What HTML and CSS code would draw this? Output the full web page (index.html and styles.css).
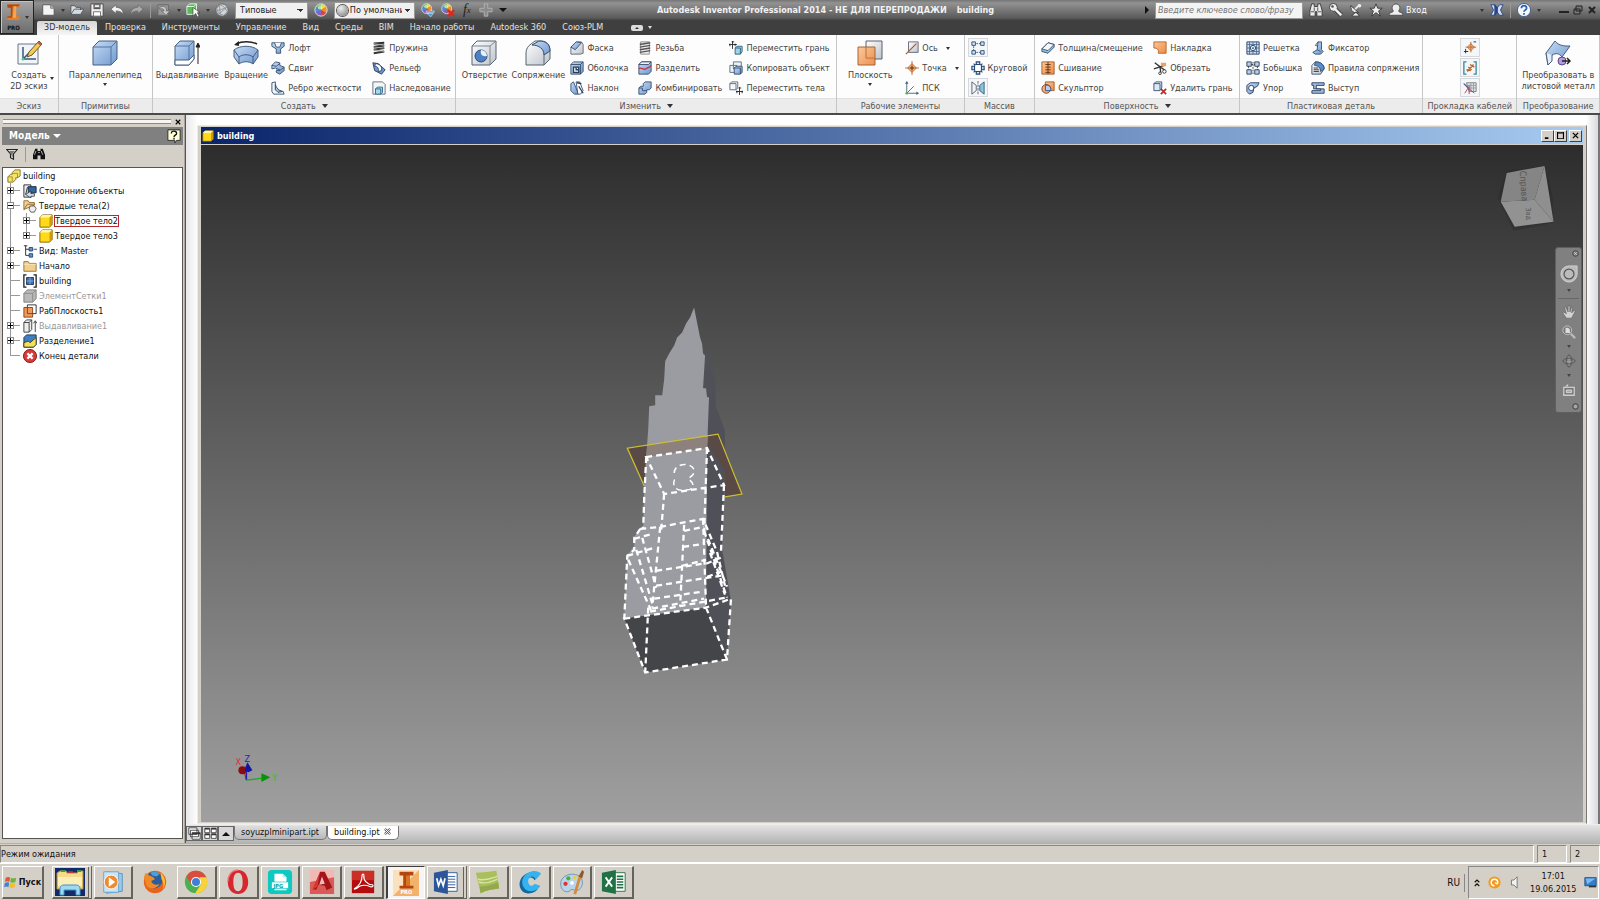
FILE: index.html
```html
<!DOCTYPE html>
<html lang="ru">
<head>
<meta charset="utf-8">
<title>Autodesk Inventor Professional 2014</title>
<link rel="stylesheet" href="styles.css">
</head>
<body>
<svg class="defs" aria-hidden="true">
<defs>
<linearGradient id="gb" x1="0" y1="0" x2="1" y2="1"><stop offset="0" stop-color="#c6dcf5"/><stop offset="1" stop-color="#6f98d0"/></linearGradient>
<linearGradient id="gw" x1="0" y1="0" x2="1" y2="1"><stop offset="0" stop-color="#fff"/><stop offset="1" stop-color="#bcc3cc"/></linearGradient>
<linearGradient id="go" x1="0" y1="0" x2="1" y2="1"><stop offset="0" stop-color="#fbc695"/><stop offset="1" stop-color="#ee8b45"/></linearGradient>
</defs>
<symbol id="new" viewBox="0 0 16 16"><path d="M2 2h9l4 4v8H2z" fill="#f4f4f4" stroke="#555"/><path d="M11 2v4h4" fill="#bbb" stroke="#777"/></symbol>
<symbol id="open" viewBox="0 0 16 16"><path d="M1 13V3h4l2 2h5v3M1 13l4-6h11l-4 6z" fill="#d5dbe2" stroke="#4e5358"/></symbol>
<symbol id="save" viewBox="0 0 16 16"><path d="M1 1h14v14H1z" fill="#eee" stroke="#444"/><path d="M4 1h8v6H4z" fill="#555"/><path d="M5 2h6v3H5zM4 10h8v5H4z" fill="#fff" stroke="#666"/></symbol>
<symbol id="undo" viewBox="0 0 16 16"><path d="M1 7l6-5v3c5 0 8 3 8 8-2-3-4-4-8-4v3z" fill="#f2f2f2" stroke="#555" stroke-width=".7"/></symbol>
<symbol id="redo" viewBox="0 0 16 16"><path d="M15 7L9 2v3c-5 0-8 3-8 8 2-3 4-4 8-4v3z" fill="#aaa" stroke="#666" stroke-width=".7"/></symbol>
<symbol id="upd" viewBox="0 0 16 16"><path d="M1 2h12v12H1z" fill="#999" stroke="#666"/><path d="M3 5c5-3 8 0 8 4h4l-5 5-5-5h3c0-2-2-3-5-2z" fill="#c4c4c4" stroke="#6a6a6a"/></symbol>
<symbol id="selg" viewBox="0 0 16 16"><path d="M1 4l3-3h8v9l-3 3H1z" fill="#5bb85b" stroke="#e8ffe8"/><path d="M1 4h8v9M9 4l3-3" fill="none" stroke="#e8ffe8"/><path d="M8 5v10l3-3 2 4 2-1-2-4h3z" fill="#fff" stroke="#333" stroke-width=".7"/></symbol>
<symbol id="ball" viewBox="0 0 16 16"><circle cx="8" cy="8" r="7" fill="#d3d6d9" stroke="#666"/><path d="M2 6l4-4 5 3 3 5-4 4-6-2zM5 2l1 11M2 9l12-4M4 13l9-8" stroke="#8b9198" fill="none"/></symbol>
<symbol id="wheel" viewBox="0 0 16 16"><path d="M8 8L8 1A7 7 0 0 1 14 4.500z" fill="#f6d83a"/><path d="M8 8L14 4.500A7 7 0 0 1 14 11.500z" fill="#f08b32"/><path d="M8 8L14 11.500A7 7 0 0 1 8 15z" fill="#d9443e"/><path d="M8 8L8 15A7 7 0 0 1 2 11.500z" fill="#8c5fc0"/><path d="M8 8L2 11.500A7 7 0 0 1 2 4.500z" fill="#4a8be0"/><path d="M8 8L2 4.500A7 7 0 0 1 8 1z" fill="#63bf55"/><circle cx="8" cy="8" r="7" fill="none" stroke="#e8e8e8"/><circle cx="7" cy="5" r="2.500" fill="#fff" opacity=".5"/></symbol>
<symbol id="wheeld" viewBox="0 0 16 16"><use href="#wheel" width="13" height="13"/><path d="M6 9h9v2H6zM7 12h7l-3 4z" fill="#4b9ae0" stroke="#fff" stroke-width=".5"/></symbol>
<symbol id="wheelx" viewBox="0 0 16 16"><use href="#wheel" width="13" height="13"/><path d="M8 8l7 7M15 8l-7 7" stroke="#d42a22" stroke-width="2.500"/></symbol>
<symbol id="plus" viewBox="0 0 16 16"><path d="M6 1h4v5h5v4h-5v5H6v-5H1V6h5z" fill="#8b8b8b" stroke="#b5b5b5"/></symbol>
<symbol id="bino" viewBox="0 0 16 16"><path d="M3 1h3v3h4V1h3l2 8v6H9v-5H7v5H1V9z" fill="#e9e9e9" stroke="#333"/><path d="M2 10h4M10 10h4M6 5v4M10 5v4" stroke="#444"/></symbol>
<symbol id="binob" viewBox="0 0 16 16"><path d="M3 1h3v3h4V1h3l3 8v6h-6v-5H6v5H0V9z" fill="#111"/><path d="M2 9l2-5M11 4l2 5M7 6h2" stroke="#ddd"/></symbol>
<symbol id="key" viewBox="0 0 16 16"><path d="M7 7l7 7" stroke="#333" stroke-width="5"/><circle cx="5" cy="5" r="4.500" fill="#eee" stroke="#333"/><path d="M7 7l7 7" stroke="#eee" stroke-width="3"/><circle cx="4" cy="4" r="1.500" fill="#555"/></symbol>
<symbol id="dish" viewBox="0 0 16 16"><path d="M2 3c0 7 4 9 9 8zM3 15h9l-4-5z" fill="#eee" stroke="#333"/><path d="M7 7l5-5" stroke="#eee" stroke-width="2"/><circle cx="12" cy="3" r="2" fill="#eee"/></symbol>
<symbol id="star" viewBox="0 0 16 16"><path d="M8 1l2 5h5l-4 3 2 6-5-4-5 4 2-6-4-3h5z" fill="#eee" stroke="#333"/></symbol>
<symbol id="user" viewBox="0 0 16 16"><path d="M5 9C2 6 4 1 8 1s6 5 3 8c0 2 5 1 5 5H0c0-4 5-3 5-5z" fill="#eee" stroke="#444"/></symbol>
<symbol id="exch" viewBox="0 0 16 16"><path d="M1 2h4l3 4 3-4h4l-3 6 3 6h-4l-3-4-3 4H1l3-6z" fill="#d3ddf0" stroke="#27458a"/><path d="M5 2l3 4v4l-3 4" stroke="#27458a" stroke-width="2" fill="#27458a"/></symbol>
<symbol id="help" viewBox="0 0 16 16"><circle cx="8" cy="8" r="7.500" fill="#f4f7fb" stroke="#3c5a8a"/><path d="M5 6c0-4 6-4 6 0 0 2-3 2-3 4M8 11.500v2" stroke="#2b62b5" stroke-width="2" fill="none"/></symbol>
<symbol id="inv" viewBox="0 0 32 32"><path d="M4 1h24l-1 6h-6v16h6l1 7H4l1-7h6V7H5z" fill="#e07f2c"/><path d="M4 1h24l-2 3H14v22H4l1-3h6V7H5z" fill="#b4470f"/><path d="M17 4h4v22h-7z" fill="#f4a552"/></symbol>

<symbol id="sketch" viewBox="0 0 26 26"><path d="M2 4h20v20H2z" fill="#f2f5f8" stroke="#6b7785"/><path d="M7 7v12h13M7 19l8-8" fill="none" stroke="#33597f" stroke-width="1.500"/><circle cx="7" cy="19" r="1.500" fill="#4c9"/><path d="M11 17l2-5L23 1l3 3-10 11z" fill="#f4cb54" stroke="#6c5526"/><path d="M22 2l3 3" stroke="#b55" stroke-width="2"/></symbol>
<symbol id="box" viewBox="0 0 26 26"><path d="M1 7l6-6h18v18l-6 6H1z" fill="url(#gb)" stroke="#465e80"/><path d="M1 7h18v18M19 7l6-6" fill="none" stroke="#5473a0"/></symbol>
<symbol id="extr" viewBox="0 0 26 26"><path d="M1 6l5-5h14v18l-5 6H1z" fill="url(#gb)" stroke="#465e80"/><path d="M1 6h14v19M15 6l5-5" fill="none" stroke="#5473a0"/><path d="M1 20h14l5-5v4l-5 6H1z" fill="#fff" stroke="#465e80"/><path d="M24 24V4M22 7l2-4 2 4z" stroke="#222" fill="#222"/></symbol>
<symbol id="rev" viewBox="0 0 26 26"><path d="M1 10c6-5 18-5 24 0v7l-5 7c-4-3-10-3-14 0l-5-7z" fill="url(#gb)" stroke="#465e80"/><path d="M1 10l5 7c4-3 10-3 14 0l5-7M6 17v7M20 17v7" fill="none" stroke="#465e80"/><path d="M24 4C18 1 9 1 3 4" fill="none" stroke="#222" stroke-width="1.500"/><path d="M1 5l5-4v5z" fill="#222"/></symbol>
<symbol id="loft" viewBox="0 0 16 16"><path d="M1 2h14v4l-4 3v5H6V9L1 6z" fill="url(#gb)" stroke="#344d6c"/><path d="M4 2l2 5h4l2-5" fill="#f5f8fb" stroke="#344d6c"/></symbol>
<symbol id="sweep" viewBox="0 0 16 16"><path d="M1 5l4-4 5 1v3l5 2v4l-5 4-4-2v-2l4-1-5-2-4 1z" fill="url(#gb)" stroke="#344d6c"/><path d="M1 5l5 1 4-3M6 10l4 1 5-4" fill="none" stroke="#344d6c"/></symbol>
<symbol id="rib" viewBox="0 0 16 16"><path d="M1 2l4-1v9l9 2 1 3H3l-2-3z" fill="#f2f5f8" stroke="#344d6c"/><path d="M5 4c1 4 4 7 8 8l-5 1-3-3z" fill="url(#gb)" stroke="#344d6c"/></symbol>
<symbol id="spring" viewBox="0 0 16 16"><path d="M2 3l12-1M2 7l12-2M2 10l12-2M2 14l12-2" stroke="#333" stroke-width="2.500"/><path d="M2 3l12 2M2 7l12 1M2 10l12 2" stroke="#aaa"/></symbol>
<symbol id="embo" viewBox="0 0 16 16"><path d="M1 2l6 1 8 7-4 5-8-4z" fill="#6f98d0" stroke="#263c5c"/><path d="M4 3c4 0 8 3 7 8l-4 1c1-4-1-6-4-6z" fill="#fff" stroke="#263c5c"/></symbol>
<symbol id="deriv" viewBox="0 0 16 16"><path d="M1 1h11l3 3v11H1z" fill="#f3f5f8" stroke="#5b6877"/><path d="M4 9l2-2h6v6l-2 2H4z" fill="#a8d8ec" stroke="#2a6181"/><path d="M4 9h6v6" fill="none" stroke="#2a6181"/></symbol>
<symbol id="hole" viewBox="0 0 26 26"><path d="M1 6l5-5h19v18l-6 6H1z" fill="url(#gw)" stroke="#59636f"/><path d="M1 6h18v19M19 6l6-5" fill="none" stroke="#7b8590"/><circle cx="10" cy="16" r="6" fill="#4d7fc4" stroke="#2f4b70"/><path d="M10 10a6 6 0 0 1 6 6c-5 1-7-2-6-6z" fill="#e7f1fb"/></symbol>
<symbol id="fillet" viewBox="0 0 26 26"><path d="M1 13C1 9 3 6 6 4l4-3h6c6 0 9 4 9 10v8l-6 6H1z" fill="url(#gw)" stroke="#59636f"/><path d="M7 5c7 0 12 4 12 10l6-4C25 4 21 1 14 1z" fill="url(#gb)" stroke="#344d6c"/><path d="M19 14v11" stroke="#59636f"/></symbol>
<symbol id="chamf" viewBox="0 0 16 16"><path d="M1 7l7-6h5l2 3v10l-3 1H1z" fill="url(#gw)" stroke="#59636f"/><path d="M1 7l6-6 6 1-7 8z" fill="url(#gb)" stroke="#344d6c"/></symbol>
<symbol id="shell" viewBox="0 0 16 16"><path d="M1 4l3-3h11v11l-3 3H1z" fill="url(#gb)" stroke="#344d6c"/><path d="M1 4h11v11M12 4l3-3" fill="none" stroke="#344d6c"/><path d="M4 7h6v6H4z" fill="#fff" stroke="#263c5c" stroke-width="1.500"/><path d="M7 7v3h3" fill="none" stroke="#263c5c" stroke-width="1.500"/></symbol>
<symbol id="draft" viewBox="0 0 16 16"><path d="M1 3l3-2 5 12v2H5L1 11z" fill="url(#gb)" stroke="#344d6c"/><path d="M7 1h4l4 10-3 4H9z" fill="#fff" stroke="#344d6c"/><path d="M10 6l5 8M8 2l5 1" stroke="#263c5c" stroke-width="1.500"/></symbol>
<symbol id="thread" viewBox="0 0 16 16"><path d="M3 1h10v14H3z" fill="#eee" stroke="#888"/><path d="M2 4l12-2M2 7l12-2M2 10l12-2M2 13l12-2" stroke="#555" stroke-width="1.500"/></symbol>
<symbol id="split" viewBox="0 0 16 16"><path d="M1 4l3-3h11v11l-3 3H1z" fill="url(#gb)" stroke="#344d6c"/><path d="M1 4h11l3-3H4z" fill="#eef4fb" stroke="#344d6c"/><path d="M1 9c3-3 5 2 8 0s4-1 6-4" fill="none" stroke="#c9333b" stroke-width="1.500"/></symbol>
<symbol id="comb" viewBox="0 0 16 16"><path d="M6 3l2-2h7v7l-2 2h-3v3l-2 2H1V8l2-2h3z" fill="url(#gb)" stroke="#344d6c"/><path d="M1 8h4v3h5" fill="none" stroke="#344d6c"/></symbol>
<symbol id="movef" viewBox="0 0 16 16"><path d="M7 8l2-2h6v6l-2 3H7z" fill="#9fd3e8" stroke="#2d5c78"/><path d="M7 8h6v7" fill="none" stroke="#2d5c78"/><path d="M4 0v9M0 4h9M3 1h3M1 3v3M7 3v3" stroke="#222"/></symbol>
<symbol id="copyo" viewBox="0 0 16 16"><path d="M1 5h8v8H1zM5 1h9v8H5z" fill="#eef2f7" stroke="#55657a"/><path d="M6 8l2-2h7v7l-2 2H6z" fill="url(#gb)" stroke="#344d6c"/><path d="M6 8h7v7" fill="none" stroke="#344d6c"/></symbol>
<symbol id="moveb" viewBox="0 0 16 16"><path d="M1 3l2-2h7v7l-2 2H1z" fill="#f5f7fa" stroke="#55657a"/><path d="M1 3h7v7" fill="none" stroke="#55657a"/><path d="M12 7v9M8 12h8M11 8h3M9 11v3M15 11v3" stroke="#222"/></symbol>
<symbol id="plane" viewBox="0 0 26 26"><path d="M9 1h16v18H9z" fill="url(#gw)" stroke="#59636f"/><path d="M1 7h17v18H1z" fill="url(#go)" stroke="#a05a24" opacity=".93"/><path d="M9 7v11h9" fill="none" stroke="#c2743a"/></symbol>
<symbol id="axis" viewBox="0 0 16 16"><path d="M4 1h11v12H4z" fill="url(#gw)" stroke="#59636f"/><path d="M1 15L13 3" stroke="#b8562c" stroke-width="1.500"/></symbol>
<symbol id="point" viewBox="0 0 16 16"><path d="M8 3l5 5-5 5-5-5z" fill="#f9b984" stroke="#b4622b"/><path d="M8 0v16M0 8h16" stroke="#b4622b"/><circle cx="8" cy="8" r="2" fill="#8a4a1b"/></symbol>
<symbol id="ucs" viewBox="0 0 16 16"><path d="M2 1v13h13M2 14l8-8" fill="none" stroke="#46617e"/><path d="M0 3l2-3 2 3zM13 12l3 2-3 2z" fill="#46617e"/><circle cx="2" cy="14" r="1.500" fill="#58a65a"/></symbol>
<symbol id="rect" viewBox="0 0 16 16"><path d="M3 3h10M3 3v10M3 13h10" stroke="#3a5c8a" stroke-dasharray="2 1" fill="none"/><path d="M1 1h4v4H1zM11 1h4v4h-4zM1 11h4v4H1zM11 11h4v4h-4z" fill="#d4e6f7" stroke="#24466f"/></symbol>
<symbol id="circ" viewBox="0 0 16 16"><circle cx="8" cy="8" r="5" fill="none" stroke="#5b7fae"/><path d="M6 1h4v3H6zM6 12h4v3H6zM1 6h3v4H1zM12 6h3v4h-3zM3 3l2 2M13 3l-2 2M3 13l2-2M13 13l-2-2" fill="#cfe2f5" stroke="#24466f" stroke-width="1.300"/></symbol>
<symbol id="mirr" viewBox="0 0 16 16"><path d="M1 1l5 4v6l-5 4z" fill="#f0f3f6" stroke="#4f5d6d"/><path d="M15 1l-5 4v6l5 4z" fill="#8cc2e0" stroke="#2d5c78"/><path d="M8 0v16" stroke="#4f5d6d" stroke-dasharray="3 1"/></symbol>
<symbol id="thick" viewBox="0 0 16 16"><path d="M1 9l7-7 7 2v3l-7 7-7-2z" fill="#8cc2e0" stroke="#344d6c"/><path d="M1 9l7-7 7 2-7 7z" fill="#f4f8fb" stroke="#344d6c"/></symbol>
<symbol id="stitch" viewBox="0 0 16 16"><path d="M1 1h14v14H1z" fill="url(#go)" stroke="#a05a24"/><path d="M8 1v14M5 4h6M5 7h6M5 10h6M5 13h6" stroke="#5b3314"/></symbol>
<symbol id="sculpt" viewBox="0 0 16 16"><path d="M5 1h10v10H5z" fill="url(#go)" stroke="#a05a24"/><circle cx="6" cy="9" r="5" fill="#f2b07c" stroke="#7a3c18"/><path d="M5 5c4-1 7 2 6 6H5z" fill="#b8cdf0" stroke="#2f4b80"/></symbol>
<symbol id="patch" viewBox="0 0 16 16"><path d="M1 1h14v13H6c1-4-1-6-5-6z" fill="url(#go)" stroke="#b4622b"/></symbol>
<symbol id="trim" viewBox="0 0 16 16"><path d="M2 2l12 9M1 9l12-4M8 7l1 7" stroke="#333" stroke-width="1.500"/><path d="M9 2h6v4h-6z" fill="#f2a05c"/><circle cx="13" cy="12" r="2" fill="#fff" stroke="#333"/><circle cx="8" cy="14" r="1.500" fill="#fff" stroke="#333"/></symbol>
<symbol id="delf" viewBox="0 0 16 16"><path d="M1 3l2-2h7v7l-2 3H1z" fill="#dce9f7" stroke="#344d6c"/><path d="M1 3h7v7" fill="none" stroke="#344d6c"/><path d="M9 9l6 6M15 9l-6 6" stroke="#c02a2a" stroke-width="2"/></symbol>
<symbol id="grill" viewBox="0 0 16 16"><path d="M1 1h14v14H1z" fill="#c9dcf0" stroke="#263c5c"/><path d="M4 1v14M8 1v14M12 1v14M1 4h14M1 8h14M1 12h14" stroke="#4f6d94"/><circle cx="8" cy="8" r="3" fill="#e9f2fb" stroke="#263c5c"/><circle cx="8" cy="8" r="1" fill="#263c5c"/></symbol>
<symbol id="boss" viewBox="0 0 16 16"><path d="M1 1h5v5H1zM10 1h5v5h-5zM1 10h5v5H1zM10 10h5v5h-5z" fill="#b8d0ea" stroke="#263c5c"/><path d="M8 1v14M3 6v4M13 6v4M6 4h4" stroke="#333" stroke-dasharray="2 1"/></symbol>
<symbol id="rest" viewBox="0 0 16 16"><path d="M1 5l4-3h10l-2 4-4 2-1 5-4 2-3-3z" fill="url(#gb)" stroke="#263c5c"/><circle cx="6" cy="8" r="3" fill="#fff" stroke="#263c5c"/></symbol>
<symbol id="snap" viewBox="0 0 16 16"><path d="M8 1h4v9l2 2-3 3H5l-3-2 5-3z" fill="url(#gb)" stroke="#344d6c"/><path d="M8 1L5 5l3 1M7 10l4 2" stroke="#344d6c" fill="none"/></symbol>
<symbol id="rule" viewBox="0 0 16 16"><path d="M1 5l4-4c6 0 10 3 10 8l-4 6H1z" fill="url(#gw)" stroke="#344d6c"/><path d="M5 1c6 0 10 3 10 8l-4 3C11 7 7 5 4 5z" fill="#5d8ccc" stroke="#344d6c"/><path d="M3 8h5M3 10h6M3 12h6" stroke="#333"/></symbol>
<symbol id="lip" viewBox="0 0 16 16"><path d="M1 2h14v3H6v4h9v5H1v-3h10V9H3V5H1z" fill="#9dbde3" stroke="#263c5c"/></symbol>
<symbol id="cab1" viewBox="0 0 16 16"><path d="M5 7l4-4 4 4-4 4z" fill="#fbc08e" stroke="#b4622b"/><path d="M9 1v12M3 7h12" stroke="#b4622b"/><path d="M3 9v5M1 12h5M12 1h3" stroke="#222"/></symbol>
<symbol id="cab2" viewBox="0 0 16 16"><path d="M4 1H1v14h3M12 1h3v14h-3" fill="none" stroke="#338a9a" stroke-width="1.500"/><path d="M5 12l7-8M4 10l5 1M8 4l5 3M6 7l4 3" stroke="#b4622b" stroke-width="1.500"/></symbol>
<symbol id="cab3" viewBox="0 0 16 16"><path d="M4 2h11v10H7z" fill="#dfe5ea" stroke="#777"/><path d="M5 5h10M6 8h9M9 2v10M12 2v10" stroke="#999"/><path d="M1 3l5 5M6 8l-4 6M6 8l7 6M7 5v10" stroke="#a33a55"/><path d="M1 3l5 5" stroke="#4169a0" stroke-width="1.500"/></symbol>
<symbol id="sheet" viewBox="0 0 26 26"><path d="M1 13L10 1c4 5 9 5 15 5l-8 11c-3-4-6-4-10-2L3 25z" fill="url(#gb)" stroke="#465e80"/><path d="M1 13l2 12 4-4v-6" fill="#e3eefa" stroke="#465e80"/><circle cx="17" cy="21" r="4" fill="#b59adb" stroke="#5c4590"/><path d="M17 21h8M22 18l3 3-3 3" stroke="#222" fill="none" stroke-width="1.500"/></symbol>

<symbol id="ycube" viewBox="0 0 16 16"><path d="M1 4l3-3h11v11l-3 3H1z" fill="#ffd91a" stroke="#7d5c00"/><path d="M1 4l3-3h11l-3 3z" fill="#fff7a8"/><path d="M12 4l3-3v11l-3 3z" fill="#d09b00"/></symbol>
<symbol id="part" viewBox="0 0 16 16"><path d="M6 4l3-3h6v7l-3 2h-2v2l-3 3H1V9l3-3h2z" fill="#f4e36c" stroke="#7a6c1c"/><path d="M1 9h5v5M6 5h6v5" fill="none" stroke="#9a8a2a"/></symbol>
<symbol id="third" viewBox="0 0 16 16"><path d="M1 1h8v14H1z" fill="#e8edf4" stroke="#222"/><path d="M3 12l2-8 3 2" stroke="#222" fill="none"/><path d="M6 3h9v7H6z" fill="#35639c" stroke="#16283f"/><path d="M3 12l6-4v3h4v3H9v2z" fill="#cfe2f5" stroke="#222" stroke-width=".8"/></symbol>
<symbol id="fold" viewBox="0 0 16 16"><path d="M1 3h5l1 2h8v9H1z" fill="#f3cf8f" stroke="#8d6a2f"/><path d="M1 6h14" stroke="#fbe7c0"/></symbol>
<symbol id="folds" viewBox="0 0 16 16"><path d="M1 12V2h5l1 2h6v3L1 12l4-6h9" fill="#f3cf8f" stroke="#8d6a2f"/><path d="M8 8h5l2 3-2 4H9l-2-3z" fill="#eee" stroke="#555"/></symbol>
<symbol id="view" viewBox="0 0 16 16"><path d="M3 2v11h5M3 6h5M1 2h4" fill="none" stroke="#222"/><path d="M7 4h4v4H7zM7 11h4v4H7zM12 6h4" fill="#6590c8" stroke="#23446e"/></symbol>
<symbol id="brk" viewBox="0 0 16 16"><path d="M4 1H1v14h3M12 1h3v14h-3" fill="none" stroke="#222" stroke-width="1.500"/><path d="M4 4h8v8H4z" fill="#3d6eb0" stroke="#17335a"/><path d="M8 4v8M4 8h8" stroke="#8db4e6"/></symbol>
<symbol id="gcube" viewBox="0 0 16 16"><path d="M1 5l4-4h10v10l-4 4H1z" fill="#b9b9b9" stroke="#777"/><path d="M1 5h10v10M11 5l4-4" stroke="#888" fill="none"/></symbol>
<symbol id="wpl" viewBox="0 0 16 16"><path d="M5 1h10v10H5z" fill="#fff" stroke="#222"/><path d="M1 4h10v11H1z" fill="#f09a5c" stroke="#7b3c10"/><path d="M5 4v7h6" fill="none" stroke="#7b3c10"/></symbol>
<symbol id="gext" viewBox="0 0 16 16"><path d="M1 4l3-3h6v11l-3 3H1z" fill="#eee" stroke="#333"/><path d="M1 4h6v11M7 4l3-3M14 15V3M12 5l2-3 2 3" stroke="#333" fill="none"/></symbol>
<symbol id="tsplit" viewBox="0 0 16 16"><path d="M1 4l3-3h11v11l-3 3H1z" fill="#3d7ec4" stroke="#173252"/><path d="M1 10l5-2 2 2 7-6v8l-3 3H1z" fill="#f3e05c" stroke="#3f3a10"/></symbol>
<symbol id="eop" viewBox="0 0 16 16"><circle cx="8" cy="8" r="7.500" fill="#d83a3a" stroke="#7f1414"/><path d="M5 5l6 6M11 5l-6 6" stroke="#fff" stroke-width="2.500"/></symbol>
<symbol id="filt" viewBox="0 0 16 16"><path d="M1 2h14l-5 6v7l-4-2V8z" fill="#ddd" stroke="#222" stroke-width="1.500"/><path d="M4 4h8l-3 3v6" fill="#777"/></symbol>
<symbol id="help2" viewBox="0 0 16 16"><path d="M1 1h14v12h-4l-2 3v-3H1z" fill="#ffffd8" stroke="#222"/><path d="M5 5c0-4 6-3 6 0 0 2-3 2-3 4M8 10v2" stroke="#111" stroke-width="1.500" fill="none"/></symbol>
<symbol id="casc" viewBox="0 0 16 16"><path d="M1 1h10v8H1zM3 4h10v8H3zM5 7h10v8H5z" fill="#fff" stroke="#333"/><path d="M5 8h10" stroke="#333" stroke-width="2"/></symbol>
<symbol id="tile" viewBox="0 0 16 16"><path d="M1 2h6v5H1zM9 2h6v5H9zM1 9h6v5H1zM9 9h6v5H9z" fill="#fff" stroke="#333"/><path d="M1 2h6M9 2h6M1 9h6M9 9h6" stroke="#333" stroke-width="2"/></symbol>

<symbol id="win" viewBox="0 0 16 16"><path d="M2 3c2-1 4-1 5 0L6 8C4 7 3 7 1 8z" fill="#e5562c"/><path d="M8 3c2 1 4 1 6 0l-1 5c-2 1-4 1-6 0z" fill="#6db33f"/><path d="M1 9c2-1 4-1 5 0l-1 5c-2-1-3-1-5 0z" fill="#3f83d0"/><path d="M7 9c2 1 4 1 6 0l-1 5c-2 1-4 1-6 0z" fill="#f4bd2e"/></symbol>
<symbol id="expl" viewBox="0 0 30 28"><path d="M0 0h30v28H0z" fill="#122a68"/><path d="M2 5l3-2h6l1 2h10l2-2h4v18H2z" fill="#f4dc8b" stroke="#b79030"/><path d="M3 9h24v9H3z" fill="#fbeeb6"/><path d="M6 3h4M22 3h4" stroke="#3a9b42" stroke-width="2"/><path d="M13 4h5" stroke="#d24" stroke-width="1.500"/><path d="M5 27v-7c0-2 2-3 4-3h12c2 0 4 1 4 3v7h-4v-5H9v5z" fill="#9fd8f3" stroke="#4394c4"/></symbol>
<symbol id="wmp" viewBox="0 0 28 28"><path d="M7 3l17 2v19L7 26z" fill="#9cc9e8" stroke="#5c93bb"/><path d="M4 3h16v22H4z" fill="#c9e4f5" stroke="#6aa4cc"/><circle cx="12" cy="14" r="7.500" fill="#f08a2c" stroke="#fff"/><path d="M9.500 9l7 5-7 5z" fill="#fff"/></symbol>
<symbol id="ff" viewBox="0 0 28 28"><circle cx="14" cy="14" r="12" fill="#e8641c"/><circle cx="13" cy="12" r="9" fill="#2b5c9e"/><path d="M9 4c4-2 8-1 10 1l-3 3-5-1z" fill="#4aa3d8"/><path d="M2 9l2-5 4 3c3 1 5 2 6 4l-4 2c1 4 6 5 9 3-2 5-10 7-14 2z" fill="#f08a24"/><path d="M20 4c5 4 7 12 2 18 2-5 1-8-1-11z" fill="#f8c12c"/></symbol>
<symbol id="chr" viewBox="0 0 28 28"><circle cx="14" cy="14" r="12" fill="#4caf50"/><path d="M3.500 8A12 12 0 0 1 25 9H14z" fill="#de4b3c"/><path d="M3.500 8l6 9 4-8z" fill="#de4b3c"/><path d="M25 9a12 12 0 0 1-12 17l6-9-1-8z" fill="#fbd238"/><circle cx="14" cy="14" r="5.500" fill="#fff"/><circle cx="14" cy="14" r="4.300" fill="#3f7fd8"/></symbol>
<symbol id="opera" viewBox="0 0 28 28"><path fill-rule="evenodd" d="M14 1C21 1 25 7 25 14s-4 13-11 13S3 21 3 14 7 1 14 1zm0 3c-4 0-5 5-5 10s1 10 5 10 5-5 5-10-1-10-5-10z" fill="#d8262f"/><path d="M14 1C7 1 3 7 3 14" stroke="#f07a7a" stroke-width="1.500" fill="none"/></symbol>
<symbol id="jpg" viewBox="0 0 28 28"><rect x="1" y="1" width="26" height="26" rx="4" fill="#0ec8c2"/><path d="M8 5h9l4 4v14H8z" fill="#fff"/><path d="M17 5v4h4" fill="#aeeae8"/><rect x="5" y="14" width="18" height="7" fill="#fff" stroke="#0ec8c2" stroke-width=".7"/><text x="7" y="20" class="badge teal">JPG</text></symbol>
<symbol id="acad" viewBox="0 0 28 28"><path d="M1 1h26v26H1z" fill="#f2b9b4"/><path d="M1 27V14l26-5v18z" fill="#da5a55"/><path d="M12 3h5l8 17-6 3-2-5-7-1-2 5H4z" fill="#a31518"/><path d="M14 8l3 8-6 1z" fill="#f2b9b4"/><path d="M12 3L4 22l5-3z" fill="#d63a35"/></symbol>
<symbol id="pdf" viewBox="0 0 28 28"><path d="M2 2h24v24H2z" fill="#b50d0d"/><path d="M2 2h24v10H2z" fill="#c93028"/><path d="M5 21c5-3 8-8 8-14 0-2 2-2 2 0-1 5 4 10 9 10 2 1 0 3-2 2-5-2-11-2-15 2-2 1-3 1-2 0z" fill="none" stroke="#fff" stroke-width="1.200"/></symbol>
<symbol id="invt" viewBox="0 0 28 28"><path d="M0 0h28v28H0z" fill="#f3b26a"/><path d="M0 0h28L0 28z" fill="#fae0bd"/><path d="M7 2h15v4h-4v11h4v3H7v-3h4V6H7z" fill="#b4470f"/><path d="M14 6h4v11h-4z" fill="#d9741f"/><text x="8" y="26" class="badge">PRO</text></symbol>
<symbol id="word" viewBox="0 0 28 28"><path d="M13 4h13v20H13z" fill="#fff" stroke="#2b579a"/><path d="M16 8h8M16 11h8M16 14h8M16 17h8M16 20h8" stroke="#2b579a"/><path d="M1 4l15-3v26L1 24z" fill="#2b579a"/><path d="M4 10l2 8 2.500-7 2.500 7 2-8" fill="none" stroke="#fff" stroke-width="1.800"/></symbol>
<symbol id="xls" viewBox="0 0 28 28"><path d="M13 4h13v20H13z" fill="#fff" stroke="#207245"/><path d="M17 8h7M17 11h7M17 14h7M17 17h7M17 20h7" stroke="#207245" stroke-width="1.800"/><path d="M1 4l15-3v26L1 24z" fill="#207245"/><path d="M5 9l7 10M12 9L5 19" stroke="#fff" stroke-width="2"/></symbol>
<symbol id="green" viewBox="0 0 28 28"><path d="M1 4c8 0 14-1 22-2l3 19c-7 1-14 2-20 5z" fill="#a9bf5c"/><path d="M3 11c8 2 14-1 21-3M4 14c8 3 15-1 20-3" stroke="#d8e4a4" stroke-width="1.500" fill="none"/><path d="M5 19c7 0 14-2 20-5l1 7c-7 1-14 2-20 5z" fill="#93a94c"/></symbol>
<symbol id="cc" viewBox="0 0 28 28"><path d="M24 7C20 1 8 3 4 11s2 17 10 15c5 0 8-3 9-6l-6-1c-3 4-8 2-7-4s6-8 9-3z" fill="#15679b"/><path d="M26 5C21 0 11 2 7 9s1 16 9 15c5-1 8-3 9-6l-6-2c-3 4-7 2-7-3s6-7 8-2z" fill="#35b3ee"/></symbol>
<symbol id="paint" viewBox="0 0 28 28"><path d="M2 18C0 9 10 4 18 6s9 10 5 15-9-1-11 2-9 2-10-5z" fill="#b7d4ea" stroke="#6b93b5"/><circle cx="7" cy="16" r="2.300" fill="#d33"/><circle cx="10" cy="10" r="2.300" fill="#5a4"/><circle cx="17" cy="9" r="2" fill="#e8d23a"/><circle cx="14" cy="15" r="2" fill="#fff"/><path d="M17 27l6-20" stroke="#d88a34" stroke-width="3"/><path d="M21 8l4-7 2 2-2 7z" fill="#8a5a32"/></symbol>
<symbol id="avast" viewBox="0 0 16 16"><circle cx="8" cy="8" r="7.500" fill="#f29a1f"/><path d="M8 12a4 4 0 1 1 4-4c0 2-2 2-3 0" fill="none" stroke="#fff" stroke-width="1.800"/></symbol>
<symbol id="spk" viewBox="0 0 16 16"><path d="M3 5h3l4-4v14l-4-4H3z" fill="#f2f2f2" stroke="#666"/></symbol>
<symbol id="mon" viewBox="0 0 16 16"><path d="M1 2h14v10H1z" fill="#2f7fd0" stroke="#26476e"/><path d="M2 3h12L4 10z" fill="#7db9ef"/><path d="M6 12h9v2H6z" fill="#333"/></symbol>
</svg>

<div class="app">
<header class="top">
  <button class="appbtn" aria-label="Меню приложения"><span class="appmark"><svg><use href="#inv"/></svg><b>PRO</b></span><i class="ar"></i></button>
  <div class="topmain">
    <div class="titlebar">
      <div class="qat">
        <button aria-label="Новый"><svg><use href="#new"/></svg></button><i class="ar"></i>
        <button aria-label="Открыть"><svg><use href="#open"/></svg></button>
        <button aria-label="Сохранить"><svg><use href="#save"/></svg></button>
        <button aria-label="Отменить"><svg><use href="#undo"/></svg></button>
        <button aria-label="Повторить"><svg><use href="#redo"/></svg></button>
        <i class="vs"></i>
        <button aria-label="Обновить"><svg><use href="#upd"/></svg></button><i class="ar"></i>
        <button aria-label="Выбор"><svg><use href="#selg"/></svg></button><i class="ar"></i>
        <button aria-label="Материал"><svg><use href="#ball"/></svg></button>
        <select aria-label="Материал детали"><option>Типовые</option></select>
        <button aria-label="Цвет"><svg><use href="#wheel"/></svg></button>
        <span class="selwrap"><i class="sphere"></i><select aria-label="Внешний вид"><option>По умолчанию</option></select></span>
        <button aria-label="Настроить"><svg><use href="#wheeld"/></svg></button>
        <button aria-label="Очистить"><svg><use href="#wheelx"/></svg></button>
        <button class="fx" aria-label="Параметры">f<sub>x</sub></button>
        <button aria-label="Добавить"><svg><use href="#plus"/></svg></button><i class="ar black"></i>
      </div>
      <h1><span>Autodesk Inventor Professional 2014 - НЕ ДЛЯ ПЕРЕПРОДАЖИ</span><span>building</span></h1>
      <div class="info">
        <i class="tri"></i><input type="text" aria-label="Поиск" placeholder="Введите ключевое слово/фразу">
        <button aria-label="Найти"><svg><use href="#bino"/></svg></button>
        <button aria-label="Ключ"><svg><use href="#key"/></svg></button>
        <button aria-label="Связь"><svg><use href="#dish"/></svg></button>
        <button aria-label="Избранное"><svg><use href="#star"/></svg></button>
        <button class="login"><svg><use href="#user"/></svg>Вход</button><i class="ar"></i>
        <button aria-label="Exchange"><svg><use href="#exch"/></svg></button><i class="vs"></i>
        <button aria-label="Справка"><svg><use href="#help"/></svg></button><i class="ar"></i>
        <div class="wb"><button aria-label="Свернуть"><svg viewBox="0 0 10 10"><path d="M0 7h10" stroke="#222" stroke-width="2"/></svg></button><button aria-label="Восстановить"><svg viewBox="0 0 10 10"><path d="M3 1h6v5H3zM1 4h6v5H1z" fill="#777" stroke="#222"/></svg></button><button aria-label="Закрыть"><svg viewBox="0 0 10 10"><path d="M2 2l6 6M8 2L2 8" stroke="#222" stroke-width="2"/></svg></button></div>
      </div>
    </div>
    <nav class="tabs"><a href="#" class="on">3D-модель</a><a href="#">Проверка</a><a href="#">Инструменты</a><a href="#">Управление</a><a href="#">Вид</a><a href="#">Среды</a><a href="#">BIM</a><a href="#">Начало работы</a><a href="#">Autodesk 360</a><a href="#">Союз-PLM</a><button class="pill" aria-label="Свернуть ленту"></button><i class="ar light"></i></nav>
  </div>
</header>

<div class="ribbon">
  <section class="pn p1"><div class="body"><button class="big"><svg><use href="#sketch"/></svg><span class="two">Создать<br>2D эскиз<i class="ar side"></i></span></button></div><h2>Эскиз</h2></section>
  <section class="pn p2"><div class="body"><button class="big"><svg><use href="#box"/></svg>Параллелепипед<i class="ar"></i></button></div><h2>Примитивы</h2></section>
  <section class="pn p3"><div class="body">
    <button class="big"><svg><use href="#extr"/></svg>Выдавливание</button><button class="big"><svg><use href="#rev"/></svg>Вращение</button>
    <div class="col"><button><svg><use href="#loft"/></svg>Лофт</button><button><svg><use href="#sweep"/></svg>Сдвиг</button><button><svg><use href="#rib"/></svg>Ребро жесткости</button></div>
    <div class="col"><button><svg><use href="#spring"/></svg>Пружина</button><button><svg><use href="#embo"/></svg>Рельеф</button><button><svg><use href="#deriv"/></svg>Наследование</button></div>
  </div><h2>Создать<i class="ar"></i></h2></section>
  <section class="pn p4"><div class="body">
    <button class="big"><svg><use href="#hole"/></svg>Отверстие</button><button class="big"><svg><use href="#fillet"/></svg>Сопряжение</button>
    <div class="col"><button><svg><use href="#chamf"/></svg>Фаска</button><button><svg><use href="#shell"/></svg>Оболочка</button><button><svg><use href="#draft"/></svg>Наклон</button></div>
    <div class="col"><button><svg><use href="#thread"/></svg>Резьба</button><button><svg><use href="#split"/></svg>Разделить</button><button><svg><use href="#comb"/></svg>Комбинировать</button></div>
    <div class="col"><button><svg><use href="#movef"/></svg>Переместить грань</button><button><svg><use href="#copyo"/></svg>Копировать объект</button><button><svg><use href="#moveb"/></svg>Переместить тела</button></div>
  </div><h2>Изменить<i class="ar"></i></h2></section>
  <section class="pn p5"><div class="body">
    <button class="big"><svg><use href="#plane"/></svg>Плоскость<i class="ar"></i></button>
    <div class="col"><button><svg><use href="#axis"/></svg>Ось<i class="ar"></i></button><button><svg><use href="#point"/></svg>Точка<i class="ar"></i></button><button><svg><use href="#ucs"/></svg>ПСК</button></div>
  </div><h2>Рабочие элементы</h2></section>
  <section class="pn p6"><div class="body"><div class="col"><button class="fr" aria-label="Прямоугольный"><svg><use href="#rect"/></svg></button><button class="ci"><svg><use href="#circ"/></svg>Круговой</button><button class="fr" aria-label="Зеркальное отражение"><svg><use href="#mirr"/></svg></button></div></div><h2>Массив</h2></section>
  <section class="pn p7"><div class="body">
    <div class="col"><button><svg><use href="#thick"/></svg>Толщина/смещение</button><button><svg><use href="#stitch"/></svg>Сшивание</button><button><svg><use href="#sculpt"/></svg>Скульптор</button></div>
    <div class="col"><button><svg><use href="#patch"/></svg>Накладка</button><button><svg><use href="#trim"/></svg>Обрезать</button><button><svg><use href="#delf"/></svg>Удалить грань</button></div>
  </div><h2>Поверхность<i class="ar"></i></h2></section>
  <section class="pn p8"><div class="body">
    <div class="col"><button><svg><use href="#grill"/></svg>Решетка</button><button><svg><use href="#boss"/></svg>Бобышка</button><button><svg><use href="#rest"/></svg>Упор</button></div>
    <div class="col"><button><svg><use href="#snap"/></svg>Фиксатор</button><button><svg><use href="#rule"/></svg>Правила сопряжения</button><button><svg><use href="#lip"/></svg>Выступ</button></div>
  </div><h2>Пластиковая деталь</h2></section>
  <section class="pn p9"><div class="body"><div class="col"><button class="fr" aria-label="Добавить точку"><svg><use href="#cab1"/></svg></button><button class="fr" aria-label="Группа контактов"><svg><use href="#cab2"/></svg></button><button class="fr" aria-label="Свойства жгута"><svg><use href="#cab3"/></svg></button></div></div><h2>Прокладка кабелей</h2></section>
  <section class="pn p10"><div class="body"><button class="big"><svg><use href="#sheet"/></svg><span class="two">Преобразовать в<br>листовой металл</span></button></div><h2>Преобразование</h2></section>
</div>

<main class="work">
  <aside class="side-panel">
    <div class="grip"><i></i><button aria-label="Закрыть панель"><svg viewBox="0 0 8 8"><path d="M1 1l6 6M7 1L1 7" stroke="#000" stroke-width="1.500"/></svg></button></div>
    <div class="mhead"><button>Модель<i class="ar"></i></button><button aria-label="Справка"><svg><use href="#help2"/></svg></button></div>
    <div class="mtools"><button aria-label="Фильтр"><svg><use href="#filt"/></svg></button><i></i><button aria-label="Поиск в модели"><svg><use href="#binob"/></svg></button></div>
    <div class="tree">
      <div class="root"><svg><use href="#part"/></svg>building</div>
      <ul>
        <li><div class="row"><button class="ex" aria-label="Развернуть"></button><svg><use href="#third"/></svg>Сторонние объекты</div></li>
        <li><div class="row"><button class="ex minus" aria-label="Свернуть"></button><svg><use href="#folds"/></svg>Твердые тела(2)</div>
          <ul class="sub"><li><div class="row"><button class="ex" aria-label="Развернуть"></button><svg><use href="#ycube"/></svg><span class="hot">Твердое тело2</span></div></li>
          <li><div class="row"><button class="ex" aria-label="Развернуть"></button><svg><use href="#ycube"/></svg>Твердое тело3</div></li></ul></li>
        <li><div class="row"><button class="ex" aria-label="Развернуть"></button><svg><use href="#view"/></svg>Вид: Master</div></li>
        <li><div class="row"><button class="ex" aria-label="Развернуть"></button><svg><use href="#fold"/></svg>Начало</div></li>
        <li><div class="row leaf"><svg><use href="#brk"/></svg>building</div></li>
        <li><div class="row leaf off"><svg><use href="#gcube"/></svg>ЭлементСетки1</div></li>
        <li><div class="row leaf"><svg><use href="#wpl"/></svg>РабПлоскость1</div></li>
        <li><div class="row off"><button class="ex" aria-label="Развернуть"></button><svg><use href="#gext"/></svg>Выдавливание1</div></li>
        <li><div class="row"><button class="ex" aria-label="Развернуть"></button><svg><use href="#tsplit"/></svg>Разделение1</div></li>
        <li><div class="row leaf"><svg><use href="#eop"/></svg>Конец детали</div></li>
      </ul>
    </div>
  </aside>
  <div class="mdi">
    <div class="desk">
      <section class="win">
        <div class="wtitle"><svg><use href="#ycube"/></svg><b>building</b><div class="wbtn"><button aria-label="Свернуть"><svg viewBox="0 0 8 8"><path d="M1 7h4" stroke="#000" stroke-width="2"/></svg></button><button aria-label="Развернуть"><svg viewBox="0 0 8 8"><path d="M0 1h8M.500 0v8h7V0" fill="none" stroke="#000" stroke-width="1.500"/></svg></button><button aria-label="Закрыть"><svg viewBox="0 0 8 8"><path d="M1 1l6 6M7 1L1 7" stroke="#000" stroke-width="1.500"/></svg></button></div></div>
        <div class="canvas">
          <svg class="scene" viewBox="201 145 1383 679" preserveAspectRatio="xMidYMid meet">
            <path d="M704 345L711 365L715 380L716 407L725 432L724 485L722 550L731 602L727 661L706 609L700 450z" fill="#505158"/>
            <path d="M627 449L718 435L742 495L725 498L724 470L709 447L646 458L644 487z" fill="#5a4a45"/>
            <path d="M694 308L690 318L686 324L682 333L677 338L674 346L669 354L665 362L664 380L662 396H655V406L649 407L648 430L646 458L644 487L643 527L640 530L634 538V547L627 557L624 620L706 609L707 450L709 398H707L706 389H703L705 356L703 354L702 344L700 338L698 328L696 318z" fill="#9b9ca1"/>
            <path d="M647 446L708 437L707 449L646 458z" fill="#8d817d"/>
            <path d="M644 487L627 449L718 435L742 495L725 498" fill="none" stroke="#cfc02f" stroke-width="1.200"/>
            <path d="M624 620L706 609L727 661L645 674z" fill="#444549"/>
            <g fill="none" stroke="#fff" stroke-width="2.300" stroke-dasharray="6 4">
              <path d="M646 458L707 449L724 486L664 495zM646 458L644 498L643 529M664 495L661 531M707 449L704 536M724 486L721 552"/>
              <path d="M640 530L660 528L703 520L717 553L725 587M640 530L634 539V551L627 557L624 620M660 528L652 609M634 540L652 535M627 557L654 549M703 520L706 609"/>
              <path d="M624 620L706 609L731 600L727 661L645 674zM648 609L645 674M706 609L727 661M628 561L651 612M636 551L653 608M642 539L656 589"/>
              <path d="M684 526L680 608M656 572L703 565M656 587L721 577M654 600L702 593M652 610L704 600M650 613L726 599M684 532L704 528M683 548L705 545M682 567L706 561"/>
              <path d="M704 532L727 599M708 540L727 588M710 554L725 596M706 565L723 558M707 578L724 572"/>
              <path d="M674 474C674 463 694 463 694 472C694 477 689 478 688 480C695 484 695 491 686 491C676 493 671 487 675 479" stroke-width="1.500"/>
            </g>
            <g class="cube"><path d="M1500 198l9-27 38-5 8 30 1 27-40 8z" fill="#252525" opacity=".35"/><path d="M1509 173l38-7-10 34-34 2z" fill="#858585"/><path d="M1503 202l34-2 19 22-39 5z" fill="#929292"/><path d="M1547 166l9 56-19-22z" fill="#8f8f8f"/><text x="1522" y="171" transform="rotate(86 1522 171)">Справа</text><text x="1528" y="208" transform="rotate(86 1528 208)" class="sm">Зад</text></g>
            <g class="axes"><path d="M245 782l-3-11" stroke="#a22"/><path d="M245 782v-14" stroke="#22a" stroke-width="1.500"/><path d="M245 782l16-2" stroke="#2a2" stroke-width="1.500"/><circle cx="241" cy="772" r="4" fill="#8c0c0c"/><path d="M246 764l5 8-4 2-4-2z" fill="#1414a5"/><path d="M260 775l9 4-9 5z" fill="#089308"/><text x="234" y="767" fill="#d23434">X</text><text x="243" y="764" fill="#2626c8">Z</text><text x="271" y="783" fill="#2fc02f">Y</text></g>
          </svg>
          <div class="navbar">
            <button aria-label="Закрыть"><svg class="mini" viewBox="0 0 10 10"><circle cx="5" cy="5" r="4" fill="none" stroke="#333"/><path d="M3 3l4 4M7 3L3 7" stroke="#ddd"/></svg></button>
            <button aria-label="Штурвал"><svg viewBox="0 0 20 20"><path d="M10 1h9v9a9 9 0 1 1-9-9z" fill="#bbb" stroke="#d2d2d2"/><circle cx="10" cy="10" r="5.500" fill="#bbb" stroke="#555" stroke-width="1.300"/></svg></button><i class="ar"></i><hr>
            <button aria-label="Панорама"><svg class="s" viewBox="0 0 16 16"><path d="M5 15L1 9l1-1 3 2-2-7 1-1 3 6V1h2v7l2-6h1l-1 7 3-3 1 1-4 8z" fill="#d2d2d2" stroke="#555" stroke-width=".6"/></svg></button>
            <button aria-label="Зум"><svg class="s" viewBox="0 0 16 16"><circle cx="6" cy="6" r="5" fill="#777" stroke="#c8c8c8"/><path d="M4 3h3l2 2v4H4z" fill="#ddd"/><path d="M10 10l5 5" stroke="#bbb" stroke-width="2.500"/></svg></button><i class="ar"></i>
            <button aria-label="Орбита"><svg class="s" viewBox="0 0 16 16"><ellipse cx="8" cy="8" rx="7" ry="3" fill="none" stroke="#555"/><ellipse cx="8" cy="8" rx="3" ry="7" fill="none" stroke="#555"/><path d="M5 9h6M8 5v6" stroke="#a7a7a7"/></svg></button><i class="ar"></i>
            <button aria-label="Вид на грань"><svg class="s" viewBox="0 0 16 16"><path d="M2 5h12v9H2z" fill="#777" stroke="#ccc" stroke-width="1.500"/><path d="M5 8h6v3H5z" fill="#aaa" stroke="#ddd"/><path d="M3 4l4-3v3z" fill="#ccc"/></svg></button>
            <button aria-label="Параметры"><svg class="mini" viewBox="0 0 10 10"><circle cx="5" cy="5" r="4" fill="none" stroke="#333"/><path d="M3 4h4M3 6h4" stroke="#ddd"/></svg></button>
          </div>
        </div>
      </section>
    </div>
    <div class="doctabs"><button aria-label="Каскад"><svg><use href="#casc"/></svg></button><button aria-label="Мозаика"><svg><use href="#tile"/></svg></button><button aria-label="Список"><i class="up"></i></button><a href="#">soyuzplminipart.ipt</a><a href="#" class="on">building.ipt<svg viewBox="0 0 8 8"><path d="M1 1l6 6M7 1L1 7" stroke="#666" stroke-width="2.500"/><path d="M1 1l6 6M7 1L1 7" stroke="#fff"/></svg></a></div>
  </div>
</main>

<div class="status"><span>Режим ожидания</span><span>1</span><span>2</span></div>
<footer class="taskbar">
  <button class="start"><svg><use href="#win"/></svg>Пуск</button>
  <div class="tasks">
    <button class="stack" aria-label="Проводник"><svg><use href="#expl"/></svg></button><button aria-label="Проигрыватель"><svg><use href="#wmp"/></svg></button><button class="flat" aria-label="Firefox"><svg><use href="#ff"/></svg></button><button aria-label="Chrome"><svg><use href="#chr"/></svg></button><button aria-label="Opera"><svg><use href="#opera"/></svg></button><button aria-label="Конвертер JPG"><svg><use href="#jpg"/></svg></button><button aria-label="AutoCAD"><svg><use href="#acad"/></svg></button><button aria-label="Acrobat"><svg><use href="#pdf"/></svg></button><button class="down" aria-label="Inventor"><svg><use href="#invt"/></svg></button><button class="stack" aria-label="Word"><svg><use href="#word"/></svg></button><button aria-label="Союз-PLM"><svg><use href="#green"/></svg></button><button aria-label="Компас"><svg><use href="#cc"/></svg></button><button aria-label="Paint"><svg><use href="#paint"/></svg></button><button aria-label="Excel"><svg><use href="#xls"/></svg></button>
  </div>
  <span class="lang">RU</span>
  <div class="tray"><svg class="chev" viewBox="0 0 8 10"><path d="M1 4l3-3 3 3M1 9l3-3 3 3" fill="none" stroke="#111" stroke-width="1.500"/></svg><svg><use href="#avast"/></svg><svg><use href="#spk"/></svg><time>17:01<br>19.06.2015</time><svg><use href="#mon"/></svg></div>
</footer>
</div>
</body>
</html>
```

FILE: styles.css
```css
* { box-sizing: border-box; }
body { margin: 0; font: 9px/12px "DejaVu Sans Condensed", "DejaVu Sans", "Noto Sans", sans-serif; color: #111; }
button { font: inherit; color: inherit; background: none; border: 0; padding: 0; margin: 0; display: flex; align-items: center; justify-content: center; white-space: nowrap; }
a { color: inherit; text-decoration: none; }
svg { width: 14px; height: 14px; flex: none; display: block; }
h1, h2, ul { margin: 0; padding: 0; font: inherit; list-style: none; }
.defs { position: absolute; width: 0; height: 0; }
.app { height: 100vh; display: flex; flex-direction: column; background: #d4d0c8; overflow: hidden; }
.ar { width: 0; height: 0; flex: none; border: 2px solid transparent; border-top: 3px solid #333; border-bottom: 0; }

.top { display: flex; height: 35px; flex: none; background: #3f3f3f; }
.appbtn { width: 34px; margin-bottom: 1px; gap: 3px; background: linear-gradient(#a5a5a5, #6d6d6d); border: 1px solid #222; box-shadow: inset 1px 1px #c4c4c4; }
.appmark { display: flex; flex-direction: column; align-items: center; gap: 1px; }
.appmark svg { width: 17px; height: 21px; }
.appmark b { font-size: 6px; line-height: 8px; color: #111; }
.topmain { flex: 1; min-width: 0; display: flex; flex-direction: column; }
.titlebar { height: 20px; display: flex; align-items: center; background: linear-gradient(#757575, #929292 15%, #5a5a5a 90%, #444); color: #fff; }
.qat { display: flex; align-items: center; gap: 6px; padding-left: 7px; flex: none; width: 472px; }
.qat select { width: 81px; height: 17px; padding: 0 12px 0 4px; }
select { appearance: none; font: inherit; color: #222; border: 1px solid #999; border-radius: 0; overflow: hidden; background: conic-gradient(from -45deg at 50% 100%, #333 90deg, transparent 0) right 4px center / 6px 3px no-repeat, #f0f0f0; }
.qat .selwrap { position: relative; display: flex; }
.qat .selwrap select { padding-left: 15px; }
.sphere { position: absolute; left: 3px; top: 3px; width: 11px; height: 11px; border-radius: 50%; background: radial-gradient(circle at 35% 30%, #eee, #777); box-shadow: 0 0 0 1px #555; }
.vs { width: 1px; height: 15px; background: #999; flex: none; }
.fx { font: italic 14px/14px "Liberation Serif", serif; width: 14px; color: #222; }
.fx sub { font-size: 9px; line-height: 8px; }
.qat .ar { margin-right: -1px; }
.ar.black { border-width: 4px 4px 0; border-color: #111 transparent transparent; }
.titlebar h1 { flex: 1; display: flex; justify-content: center; gap: 10px; font-weight: bold; white-space: nowrap; color: #f2f2f2; }
.info { display: flex; align-items: center; gap: 6px; flex: none; width: 455px; padding-right: 3px; }
.info input { width: 148px; height: 17px; font: inherit; font-style: italic; border: 1px solid #999; background: #f4f4f4; padding: 0 2px; }
.info input::placeholder { color: #777; opacity: 1; }
.tri { border: 4px solid transparent; border-left-color: #111; border-right: 0; flex: none; }
.login { gap: 3px; margin-right: auto; }
.wb { display: flex; gap: 4px; margin-left: 12px; }
.wb svg { width: 10px; height: 10px; }
.tabs { flex: 1; display: flex; align-items: stretch; padding-left: 3px; color: #e2e2e2; line-height: 14px; }
.tabs a { padding: 0 8px; white-space: nowrap; }
.tabs .on { background: linear-gradient(#d5d5d5, #f6f6f6); color: #333; border-radius: 2px 2px 0 0; margin-top: 1px; line-height: 13px; padding: 0 7px; }
.pill { width: 12px; height: 6px; background: #ddd; border-radius: 2px; margin: 5px 5px 0 20px; }
.pill::after { content: ""; border: 2px solid transparent; border-bottom-color: #333; border-top: 0; }
.ar.light { border-top-color: #ddd; align-self: center; }

.ribbon { height: 80px; flex: none; display: flex; border-bottom: 2px solid #4a4a4a; background: #fdfdfd; color: #444; }
.pn { min-width: 0; display: flex; flex-direction: column; border-right: 1px solid #c6c6c6; }
.pn h2 { height: 15px; background: #ececec; display: flex; justify-content: center; align-items: center; gap: 6px; color: #555; border-top: 1px solid #e0e0e0; padding-bottom: 1px; white-space: nowrap; }
.pn h2 .ar { border-width: 4px 3px 0; }
.body { flex: 1; display: grid; padding-top: 3px; }
.p1 { flex: 58 1 0; } .p2 { flex: 94 1 0; } .p3 { flex: 304 1 0; } .p4 { flex: 382 1 0; } .p5 { flex: 127 1 0; }
.p6 { flex: 70 1 0; } .p7 { flex: 205 1 0; } .p8 { flex: 183 1 0; } .p9 { flex: 94 1 0; } .p10 { flex: 82 1 0; }
.p2 .body { justify-content: center; }
.p3 .body { grid-template-columns: 68px 50px 101px 1fr; }
.p4 .body { grid-template-columns: 56px 52px 6px 68px 91px 1fr; }
.p4 .col:nth-of-type(1) { grid-column: 4; }
.p5 .body { grid-template-columns: 66px 1fr; column-gap: 2px; }
.p6 .body { padding-left: 3px; }
.p7 .body { padding-left: 6px; grid-template-columns: 112px 1fr; }
.p8 .body { padding-left: 6px; grid-template-columns: 65px 1fr; }
.big { flex-direction: column; justify-content: flex-start; padding-top: 2px; line-height: 11px; }
.big > svg { width: 26px; height: 26px; margin-bottom: 4px; }
.big > .ar { margin-top: 2px; }
.two { position: relative; text-align: center; }
.side { position: absolute; right: -7px; top: 7px; }
.col { display: grid; grid-template-rows: repeat(3, 20px); justify-items: start; }
.p9 .col { justify-items: center; }
.col button { gap: 3px; }
.col .ar { margin-left: 5px; }
.fr { width: 20px; height: 19px; border: 1px solid #d5d9de; background: #f5f6f8; }
.p6 .ci { padding-left: 3px; gap: 3px; }

.work { flex: 1; min-height: 0; display: flex; }
.side-panel { width: 185px; flex: none; display: flex; flex-direction: column; padding: 2px 1px 4px 2px; border-right: 1px solid #aaa69e; }
.grip { display: flex; align-items: center; gap: 4px; height: 9px; padding-left: 1px; }
.grip i { flex: 1; height: 5px; border: solid #8c8a84; border-width: 1px 0; background: #f6f5f2; }
.grip svg { width: 6px; height: 6px; }
.grip button { margin-right: 2px; }
.mhead { height: 18px; background: #808080; color: #fff; font-weight: bold; font-size: 10px; display: flex; justify-content: space-between; align-items: center; padding: 0 2px 0 7px; margin-top: 1px; }
.mhead .ar { border: 4px solid transparent; border-top: 4px solid #fff; border-bottom: 0; margin-left: 3px; }
.mtools { height: 22px; display: flex; align-items: center; gap: 7px; padding: 0 0 4px 4px; }
.mtools i { width: 1px; height: 15px; background: #999; }
.mtools svg { width: 12px; height: 12px; }
.tree { flex: 1; background: #fff; border: 1px solid #555; padding: 0 0 0 4px; color: #111; }
.root { display: flex; align-items: center; gap: 2px; height: 15px; }
.tree ul { background: linear-gradient(#999, #999) 3px 0 / 1px calc(100% - 7px) no-repeat; }
.row { height: 15px; display: flex; align-items: center; gap: 2px; background: linear-gradient(#999, #999) 3px 7px / 10px 1px no-repeat; white-space: nowrap; }
.tree .sub { margin-left: 16px; }
.ex { width: 7px; height: 7px; margin-right: 7px; border: 1px solid #888; background: linear-gradient(#000, #000) center / 5px 1px no-repeat, linear-gradient(#000, #000) center / 1px 5px no-repeat, #fff; }
.ex.minus { background: linear-gradient(#000, #000) center / 5px 1px no-repeat, #fff; }
.leaf { padding-left: 16px; }
.off { color: #999; }
.hot { outline: 1px solid #b3282d; line-height: 10px; }

.mdi { flex: 1; min-width: 0; display: flex; flex-direction: column; border-left: 1px solid #555; }
.desk { flex: 1; min-height: 0; display: flex; padding: 10px 11px 0; background: linear-gradient(90deg, #e8e8ea, #fff 12px, #fff calc(100% - 12px), #d9d9dd); border-right: 2px solid #777; }
.win { flex: 1; display: flex; flex-direction: column; padding: 1px 3px 1px; background: #d4d0c8; border: 1px solid #eceae5; border-right-color: #777; }
.wtitle { height: 17px; display: flex; align-items: center; gap: 3px; padding: 0 1px; color: #fff; background: linear-gradient(90deg, #0a246a, #a6caf0); }
.wtitle svg { width: 12px; height: 12px; }
.wbtn { margin-left: auto; display: flex; }
.wbtn button { width: 13px; height: 12px; background: #d4d0c8; border: 1px solid #fff; border-right-color: #404040; border-bottom-color: #404040; }
.wbtn button:last-child { margin-left: 2px; }
.wbtn svg { width: 7px; height: 7px; }
.canvas { position: relative; flex: 1; min-height: 0; margin-top: 1px; background: linear-gradient(#2d2d2d, #666 50%, #a0a0a0); overflow: hidden; }
.scene { position: absolute; inset: 0; width: 100%; height: 100%; }
.cube text { font-size: 9px; fill: #555; }
.cube .sm { font-size: 7px; }
.axes text { font-size: 9px; }
.navbar { position: absolute; right: 1px; top: 102px; width: 27px; display: flex; flex-direction: column; align-items: center; gap: 6px; padding: 2px 0; background: #808080; border: 1px solid #5f5f5f; border-radius: 3px; }
.navbar svg { width: 18px; height: 18px; }
.navbar .s { width: 14px; height: 14px; }
.navbar .mini { width: 7px; height: 7px; }
.navbar button:first-child, .navbar button:last-child { align-self: flex-end; margin-right: 2px; }
.navbar button:first-child { margin-bottom: 2px; }
.navbar .ar { border-top-color: #444; }
.navbar hr { width: 21px; height: 1px; margin: 0; border: 0; background: #666; }
.doctabs { height: 19px; flex: none; display: flex; align-items: flex-start; background: linear-gradient(#e4e4e4, #b4b4b4); border-top: 1px solid #eee; padding-top: 1px; }
.doctabs button { width: 16px; height: 15px; border: 1px solid #666; background: #d8d8d8; }
.doctabs button svg { width: 13px; height: 13px; }
.up { border: 4px solid transparent; border-bottom-color: #111; border-top: 0; }
.doctabs a { height: 14px; padding: 0 7px 0 6px; line-height: 12px; border: 1px solid #777; border-top: 0; border-radius: 0 0 5px 5px; background: linear-gradient(#ddd, #b9b9b9); display: flex; gap: 4px; }
.doctabs .on { background: #fff; }
.doctabs a svg { width: 7px; height: 7px; margin-top: 2px; }

.status { height: 20px; flex: none; display: flex; gap: 3px; padding-top: 1px; border-top: 1px solid #b5b1a8; }
.status span { border: 1px solid #8b887f; border-right-color: #fff; border-bottom-color: #fff; width: 30px; padding-left: 4px; line-height: 17px; }
.status span:first-child { flex: 1; padding-left: 0; }
.taskbar { height: 37px; flex: none; display: flex; align-items: stretch; padding: 2px 1px 1px 2px; border-top: 1px solid #fff; }
.taskbar button { border: 1px solid #fff; border-right: 2px solid #66635d; border-bottom: 2px solid #66635d; }
.start { width: 42px; font-weight: bold; gap: 1px; margin-right: 8px; }
.tasks { width: 582px; display: grid; grid-template-columns: repeat(14, 1fr); gap: 2px; }
.tasks svg { width: 26px; height: 26px; }
.tasks .stack { border-right: 4px double #66635d; }
.tasks .stack:first-child svg { width: 30px; height: 28px; }
.tasks .flat { border-color: transparent; }
.tasks .down { background: #f6f5f3; border: 1px solid #fff; border-top-color: #404040; border-left: 2px solid #404040; }
.badge { font-size: 6px; font-weight: bold; fill: #fff; }
.badge.teal { fill: #0aa39e; }
.lang { margin-left: auto; align-self: center; padding-right: 4px; border-right: 1px solid #888; line-height: 18px; margin-right: 3px; font-size: 10px; }
.tray { display: flex; align-items: center; gap: 8px; width: 131px; padding: 0 2px 0 5px; border: 1px solid #888; border-right-color: #fff; border-bottom-color: #fff; }
.tray .chev { width: 6px; height: 8px; }
.tray time { text-align: center; line-height: 13px; flex: 1; white-space: nowrap; }
.tray svg { width: 13px; height: 13px; }
```
